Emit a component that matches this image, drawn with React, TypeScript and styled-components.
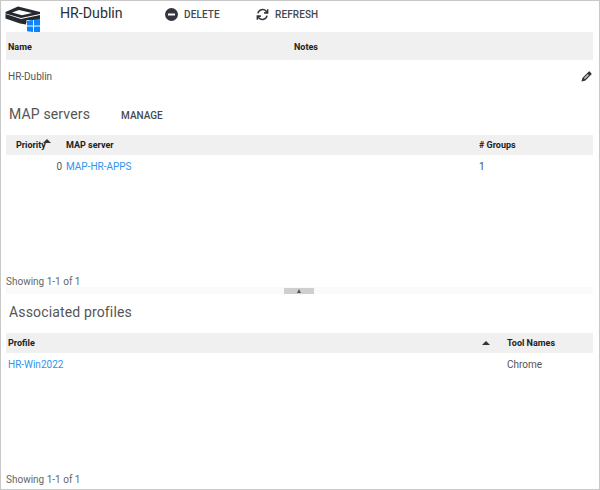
import React from 'react';
import styled, { createGlobalStyle } from 'styled-components';

const GlobalStyle = createGlobalStyle`
  html, body { margin: 0; padding: 0; background: #fff; }
  body { font-family: Roboto, "Liberation Sans", sans-serif; }
`;

const Page = styled.div`
  width: 600px;
  height: 490px;
  box-sizing: border-box;
  border: 1px solid #c8c8c8;
  padding: 0 6px 0 5px;
  display: flex;
  flex-direction: column;
  overflow: hidden;
  color: #444;
  font-size: 10px;
`;
const Header = styled.div`
  height: 31px;
  display: flex;
  align-items: flex-start;
`;
const Logo = styled.svg`
  width: 36px;
  height: 28px;
  margin: 4px 0 0 -1px;
  flex: none;
`;
const Title = styled.div`
  font-size: 14.2px;
  line-height: 16px;
  color: #2b2f36;
  margin: 4px 0 0 19px;
  width: 105px;
`;
const HeadButton = styled.div<{ $width: number }>`
  display: flex;
  align-items: center;
  gap: 6px;
  width: ${({ $width }) => $width}px;
  height: 14px;
  margin-top: 6px;
  font-size: 10px;
  font-weight: 500;
  color: #444a52;
  letter-spacing: 0.1px;
`;
const TableHead = styled.div<{ $height: number; $nudge?: number }>`
  height: ${({ $height }) => $height}px;
  box-sizing: border-box;
  padding-top: ${({ $nudge }) => $nudge || 0}px;
  background: #f0f0f0;
  display: flex;
  align-items: center;
  font-size: 9px;
  font-weight: 700;
  color: #222;
`;
const Row = styled.div<{ $height: number }>`
  height: ${({ $height }) => $height}px;
  display: flex;
  align-items: center;
  font-size: 10px;
  color: #555;
`;
const Cell = styled.div<{ $width?: number; $pad?: number; $right?: boolean }>`
  width: ${({ $width }) => ($width ? `${$width}px` : 'auto')};
  flex: ${({ $width }) => ($width ? 'none' : 1)};
  padding-left: ${({ $pad }) => $pad || 0}px;
  box-sizing: border-box;
  position: relative;
  display: flex;
  align-items: center;
  justify-content: ${({ $right }) => ($right ? 'flex-end' : 'flex-start')};
`;
const PriorityValue = styled(Cell)`
  padding-right: 4px;
`;
const Link = styled.span`
  color: #2f94ee;
`;
const CountLink = styled.span`
  color: #3a4a90;
`;
const SortArrow = styled.span`
  width: 0;
  height: 0;
  border-left: 4.5px solid transparent;
  border-right: 4.5px solid transparent;
  border-bottom: 4.5px solid #333;
`;
const OverArrow = styled(SortArrow)`
  position: absolute;
  left: 37px;
  top: -1px;
`;
const SectionHead = styled.div<{ $height: number; $top?: number; $bottom?: number }>`
  height: ${({ $height }) => $height}px;
  box-sizing: border-box;
  padding: ${({ $top }) => $top || 0}px 0 ${({ $bottom }) => $bottom || 0}px 3px;
  display: flex;
  align-items: center;
  flex: none;
`;
const SectionTitle = styled.div`
  font-size: 14px;
  color: #555;
  letter-spacing: 0.15px;
`;
const ManageButton = styled.div`
  font-size: 10px;
  font-weight: 500;
  color: #444a52;
  margin: 2px 0 0 31px;
`;
const Filler = styled.div<{ $height?: number }>`
  flex: ${({ $height }) => ($height ? `0 0 ${$height}px` : 1)};
`;
const Footer = styled.div<{ $height: number; $lineHeight: number }>`
  height: ${({ $height }) => $height}px;
  display: flex;
  align-items: flex-end;
  font-size: 10px;
  line-height: ${({ $lineHeight }) => $lineHeight}px;
  color: #666;
  flex: none;
`;
const Splitter = styled.div`
  height: 7px;
  background: #fafafa;
  display: flex;
  justify-content: center;
  flex: none;
`;
const SplitHandle = styled.div`
  width: 30px;
  height: 6px;
  background: #cfcfcf;
  margin: 1px 0 0 -1px;
  display: flex;
  justify-content: center;
  align-items: center;
`;
const SplitArrow = styled.span`
  width: 0;
  height: 0;
  border-left: 2.5px solid transparent;
  border-right: 2.5px solid transparent;
  border-bottom: 4px solid #555;
`;
const Pencil = styled.svg`
  width: 11px;
  height: 11px;
  margin-right: 1px;
`;

const App = () => (
  <Page>
    <GlobalStyle />
    <Header>
      <Logo viewBox="0 0 36 28">
        <path d="M0.5 7 L13 1.5 L35 7 L35 9 L16 13 L0.5 8.5 Z" fill="#24292f" />
        <path d="M7 7.4 L14 5 L27 8 L17 10.2 Z" fill="#fff" />
        <path d="M0.5 9 L16 14 L35 10 L35 15 L21 18 V19.5 L15 18.5 L0.5 13.5 Z" fill="#24292f" />
        <path d="M21.5 15 h14.5 v13 h-14.5 z" fill="#fff" />
        <path d="M22 15.8 L28 14.9 V20.6 H22 Z M29 14.7 L35 13.8 V20.6 H29 Z M22 21.6 H28 V27 L22 26.2 Z M29 21.6 H35 V28 L29 27.2 Z" fill="#0a84ff" />
      </Logo>
      <Title>HR-Dublin</Title>
      <HeadButton $width={91}>
        <svg width="13" height="13" viewBox="0 0 13 13">
          <circle cx="6.5" cy="6.5" r="6.5" fill="#33373d" />
          <rect x="3" y="5.5" width="7" height="2" fill="#fff" />
        </svg>
        DELETE
      </HeadButton>
      <HeadButton $width={90}>
        <svg width="13" height="13" viewBox="0 0 24 24" fill="none" stroke="#33373d" strokeWidth="2.8">
          <path d="M3.5 10a9 9 0 0 1 15.5-4l2.5 2.5" />
          <path d="M21.5 2.5v6.5h-6.5" />
          <path d="M20.5 14a9 9 0 0 1-15.5 4l-2.5-2.5" />
          <path d="M2.5 21.5V15h6.5" />
        </svg>
        REFRESH
      </HeadButton>
    </Header>
    <TableHead $height={28} $nudge={1}>
      <Cell $width={288} $pad={2}>Name</Cell>
      <Cell>Notes</Cell>
    </TableHead>
    <Row $height={32}>
      <Cell $pad={2}>HR-Dublin</Cell>
      <Cell $width={30} $right>
        <Pencil viewBox="0 0 24 24">
          <path d="M1 23l2-8L16.5 1.5a2 2 0 0 1 2.8 0l3.2 3.2a2 2 0 0 1 0 2.8L9 21z" fill="#333" />
          <path d="M6 15.5l9-9 2.5 2.5-9 9z" fill="#bbb" />
        </Pencil>
      </Cell>
    </Row>
    <SectionHead $height={43} $top={1}>
      <SectionTitle>MAP servers</SectionTitle>
      <ManageButton>MANAGE</ManageButton>
    </SectionHead>
    <TableHead $height={20}>
      <Cell $width={60} $pad={10}>
        Priority
        <OverArrow />
      </Cell>
      <Cell $width={413}>MAP server</Cell>
      <Cell># Groups</Cell>
    </TableHead>
    <Row $height={23}>
      <PriorityValue $width={60} $right>0</PriorityValue>
      <Cell $width={413}><Link>MAP-HR-APPS</Link></Cell>
      <Cell><CountLink>1</CountLink></Cell>
    </Row>
    <Filler $height={94} />
    <Footer $height={15} $lineHeight={10}>Showing 1-1 of 1</Footer>
    <Splitter>
      <SplitHandle><SplitArrow /></SplitHandle>
    </Splitter>
    <SectionHead $height={39} $bottom={3}>
      <SectionTitle>Associated profiles</SectionTitle>
    </SectionHead>
    <TableHead $height={20}>
      <Cell $pad={2}>Profile</Cell>
      <Cell $width={28} $pad={3}><SortArrow /></Cell>
      <Cell $width={86}>Tool Names</Cell>
    </TableHead>
    <Row $height={23}>
      <Cell $pad={2}><Link>HR-Win2022</Link></Cell>
      <Cell $width={86}>Chrome</Cell>
    </Row>
    <Filler />
    <Footer $height={16} $lineHeight={12}>Showing 1-1 of 1</Footer>
    <Filler $height={3} />
  </Page>
);

export default App;
